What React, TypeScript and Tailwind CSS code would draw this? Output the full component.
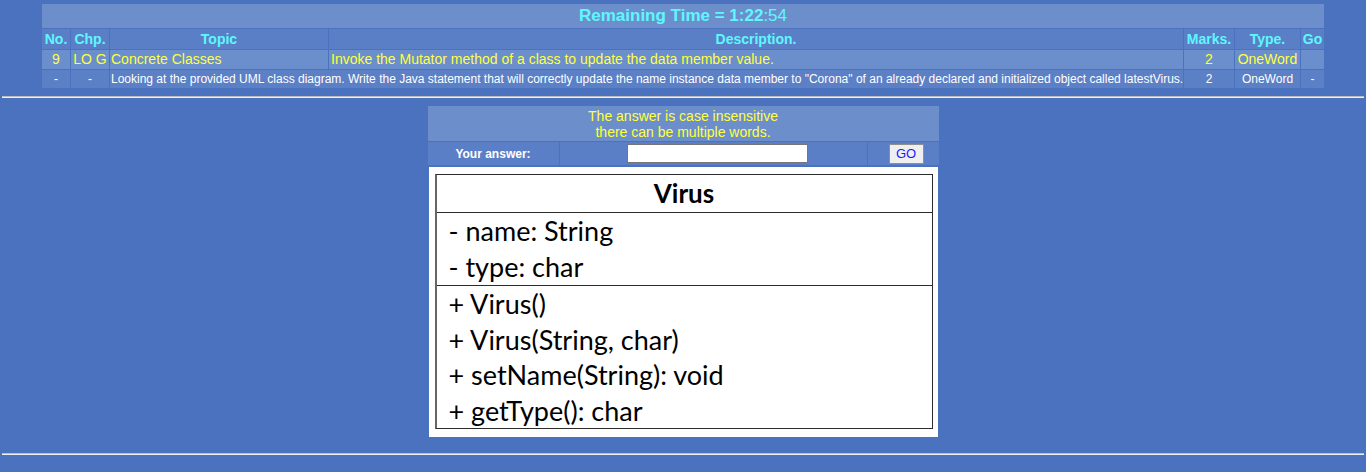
import React from 'react';

const COLS = 'grid-cols-[28px_38px_218px_854px_50px_65px_23px]';

const headers = ['No.', 'Chp.', 'Topic', 'Description.', 'Marks.', 'Type.', 'Go'];

function Rule() {
  return <div className="mx-[2px] h-[2px] border-t border-t-[#bdbdbd] border-b border-b-[#efefef]" />;
}

function UmlDiagram() {
  return (
    <div className="border border-[#2b2b2b] border-l-2 border-l-[#666] text-black font-['Lato','Open_Sans',sans-serif]">
      <div className="h-[38px] flex items-center justify-center text-[26px] font-bold border-b border-[#2b2b2b]">
        Virus
      </div>
      <div className="border-b border-[#2b2b2b] pl-[12px] text-[27px] leading-[36px]">
        <div>- name: String</div>
        <div>- type: char</div>
      </div>
      <div className="pl-[12px] text-[27px] leading-[35.5px]">
        <div>+ Virus()</div>
        <div>+ Virus(String, char)</div>
        <div>+ setName(String): void</div>
        <div>+ getType(): char</div>
      </div>
    </div>
  );
}

export default function App() {
  return (
    <div className="min-h-screen w-full bg-[#4b72be] pt-[4px] font-['Liberation_Sans',Arial,sans-serif]">
      {/* Question table */}
      <div className={`mx-auto w-[1282px] grid ${COLS} gap-px`}>
        <div className="col-span-7 h-[24px] bg-[#6c8fcc] flex items-center justify-center text-[17px] text-[#5ff7ff]">
          <span className="font-bold">Remaining Time = 1:22</span>
          <span>:54</span>
        </div>
        {headers.map((h) => (
          <div
            key={h}
            className="h-[20px] bg-[#5b7fc6] flex items-center justify-center text-[14px] font-bold text-[#5ff7ff]"
          >
            {h}
          </div>
        ))}

        <div className="h-[19px] bg-[#6b8ecc] flex items-center justify-center text-[14px] text-[#ffff3d]">9</div>
        <div className="h-[19px] bg-[#6b8ecc] flex items-center justify-center text-[14px] text-[#ffff3d] whitespace-nowrap">LO G</div>
        <div className="h-[19px] bg-[#6b8ecc] flex items-center pl-[1px] text-[14px] text-[#ffff3d]">Concrete Classes</div>
        <div className="h-[19px] bg-[#6b8ecc] flex items-center pl-[2px] text-[14px] text-[#ffff3d] whitespace-nowrap">
          Invoke the Mutator method of a class to update the data member value.
        </div>
        <div className="h-[19px] bg-[#6b8ecc] flex items-center justify-center text-[14px] text-[#ffff3d]">2</div>
        <div className="h-[19px] bg-[#6b8ecc] flex items-center justify-center text-[14px] text-[#ffff3d]">OneWord</div>
        <div className="h-[19px] bg-[#6b8ecc]" />

        <div className="h-[18px] bg-[#5b80c6] flex items-center justify-center text-[12px] text-white">-</div>
        <div className="h-[18px] bg-[#5b80c6] flex items-center justify-center text-[12px] text-white">-</div>
        <div className="col-span-2 h-[18px] bg-[#5b80c6] flex items-center pl-px text-[12px] text-white whitespace-nowrap">
          Looking at the provided UML class diagram. Write the Java statement that will correctly update the name instance data member to "Corona" of an already declared and initialized object called latestVirus.
        </div>
        <div className="h-[18px] bg-[#5b80c6] flex items-center justify-center text-[12px] text-white">2</div>
        <div className="h-[18px] bg-[#5b80c6] flex items-center justify-center text-[12px] text-white">OneWord</div>
        <div className="h-[18px] bg-[#5b80c6] flex items-center justify-center text-[12px] text-white">-</div>
      </div>

      <div className="mt-[8px]">
        <Rule />
      </div>

      {/* Answer panel */}
      <div className="mx-auto mt-[8px] w-[511px] grid grid-cols-[131px_307px_71px] gap-px">
        <div className="col-span-3 h-[35px] bg-[#6c8fcc] flex flex-col items-center justify-center text-[14px] leading-[16px] text-[#ffff3d]">
          <span>The answer is case insensitive</span>
          <span>there can be multiple words.</span>
        </div>
        <div className="h-[23px] bg-[#5b7fc6] flex items-center justify-center text-[12px] font-bold text-white">
          Your answer:
        </div>
        <div className="h-[23px] bg-[#5b7fc6] flex items-center justify-center pl-[8px]">
          <input type="text" className="w-[181px] h-[19px] bg-white border border-[#767676] outline-none" />
        </div>
        <div className="h-[23px] bg-[#5b7fc6] flex items-center justify-center pl-[6px]">
          <button
            type="button"
            className="w-[35px] h-[20px] bg-[#efefef] border border-[#8f8f8f] text-[13px] text-[#1a1aff] leading-none"
          >
            GO
          </button>
        </div>
        <div className="col-span-3 mx-px mt-px bg-white pt-[7px] pl-[6px] pr-[5px] pb-[8px]">
          <UmlDiagram />
        </div>
      </div>

      <div className="mt-[16px]">
        <Rule />
      </div>
    </div>
  );
}
